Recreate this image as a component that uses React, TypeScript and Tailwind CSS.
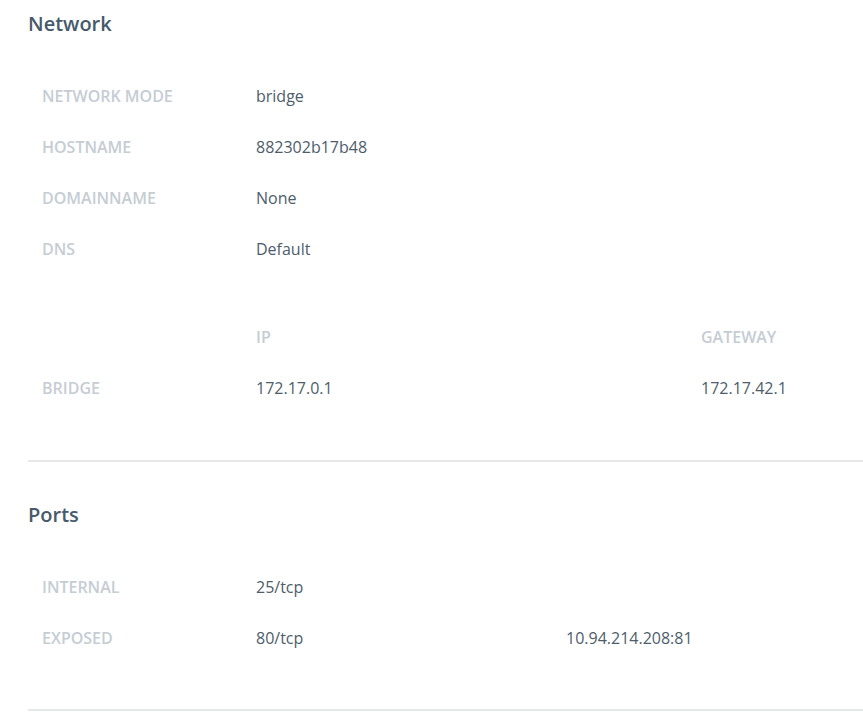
import React from "react";

const font = { fontFamily: '"Open Sans", "Liberation Sans", sans-serif' };

function Label({ children }: { children?: React.ReactNode }) {
  return <div className="text-[16px] font-semibold uppercase text-[#c5cdd4]">{children}</div>;
}

function Value({ children }: { children?: React.ReactNode }) {
  return <div className="text-[16px] text-[#4e5d6c]">{children}</div>;
}

function Row({ cols, children }: { cols: string; children: React.ReactNode }) {
  return <div className={`grid h-[51px] items-center pl-[14px] ${cols}`}>{children}</div>;
}

export default function App() {
  const network = [
    ["Network mode", "bridge"],
    ["Hostname", "882302b17b48"],
    ["Domainname", "None"],
    ["DNS", "Default"],
  ];

  return (
    <div className="min-h-[715px] w-[863px] bg-white pl-[28px]" style={font}>
      <section>
        <h2 className="flex h-[47px] items-center pt-px text-[20px] font-semibold text-[#475a6c]">Network</h2>
        <div className="mt-[23px]">
          {network.map(([k, v]) => (
            <Row key={k} cols="grid-cols-[214px_1fr]">
              <Label>{k}</Label>
              <Value>{v}</Value>
            </Row>
          ))}
        </div>
        <div className="mt-[37px]">
          <Row cols="grid-cols-[214px_445px_1fr]">
            <Label />
            <Label>IP</Label>
            <Label>Gateway</Label>
          </Row>
          <Row cols="grid-cols-[214px_445px_1fr]">
            <Label>Bridge</Label>
            <Value>172.17.0.1</Value>
            <Value>172.17.42.1</Value>
          </Row>
        </div>
        <div className="mt-[47px] h-[2px] bg-[#e6e7e8]" />
      </section>

      <section className="pt-[29px]">
        <h2 className="flex h-[47px] items-center pt-px text-[20px] font-semibold text-[#475a6c]">Ports</h2>
        <div className="mt-[23px]">
          <Row cols="grid-cols-[214px_310px_1fr]">
            <Label>Internal</Label>
            <Value>25/tcp</Value>
            <Value />
          </Row>
          <Row cols="grid-cols-[214px_310px_1fr]">
            <Label>Exposed</Label>
            <Value>80/tcp</Value>
            <Value>10.94.214.208:81</Value>
          </Row>
        </div>
        <div className="mt-[46px] h-[2px] bg-[#e6e7e8]" />
      </section>
    </div>
  );
}
